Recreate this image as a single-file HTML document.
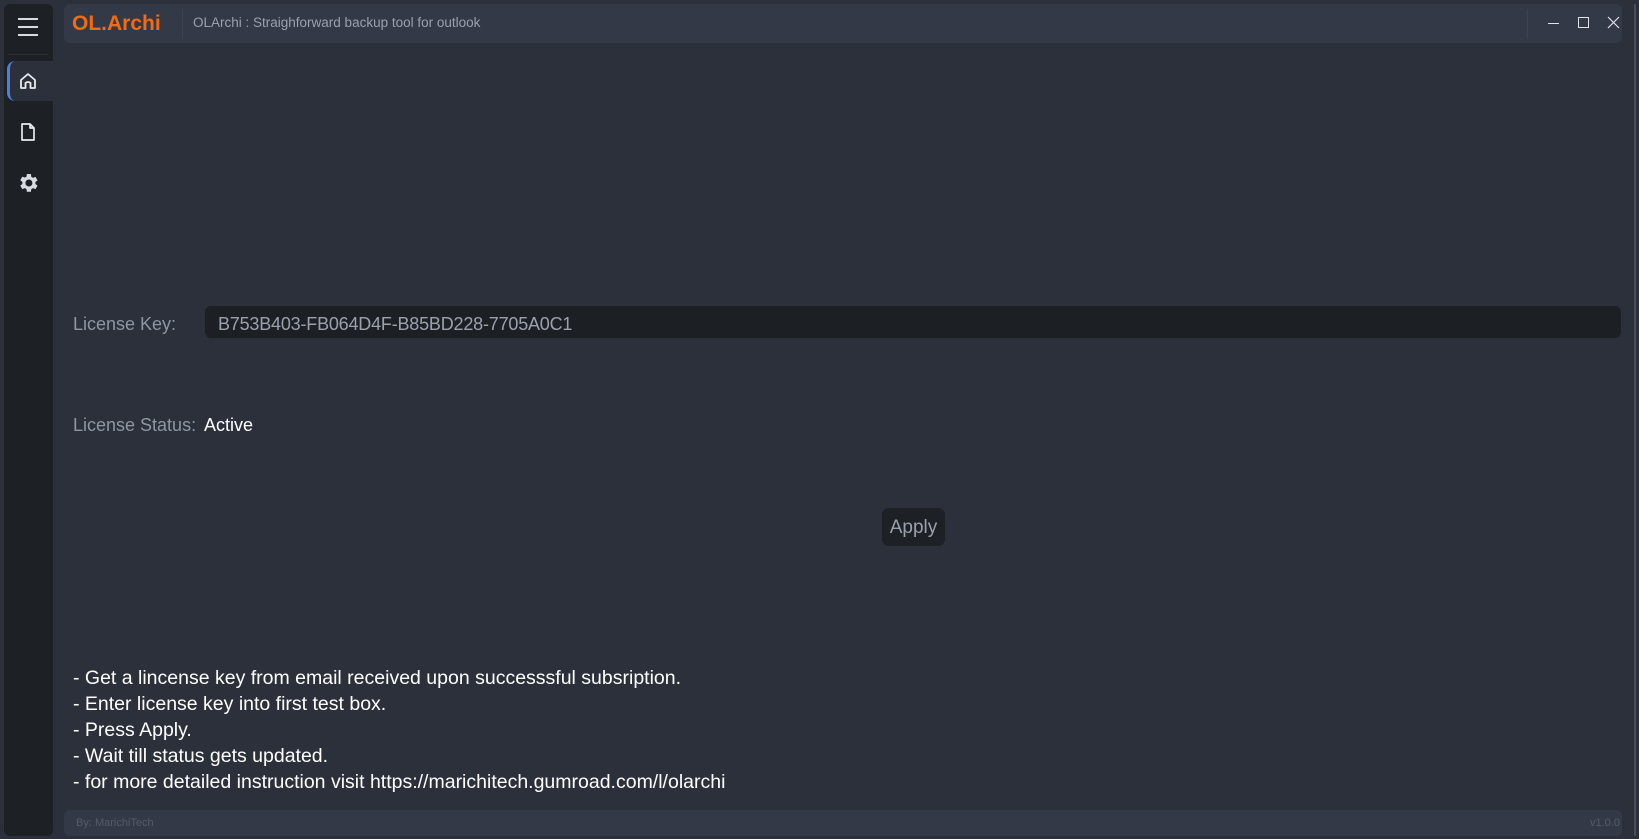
<!DOCTYPE html>
<html><head><meta charset="utf-8"><style>
*{margin:0;padding:0;box-sizing:border-box}
body{width:1639px;height:839px;background:#2b303a;font-family:"Liberation Sans",sans-serif;position:relative;overflow:hidden;color:#fff}
.abs{position:absolute}
#side{left:4px;top:4px;width:49px;height:832px;background:#1d2025;border-radius:6px}
#sel{left:7px;top:61px;width:46px;height:40px;background:#2b303a;border-left:3px solid #4d7fd6;border-radius:8px 0 0 8px}
#title{left:64px;top:4px;width:1558px;height:39px;background:#333946;border-radius:6px}
#foot{left:64px;top:810px;width:1558px;height:26px;background:#333946;border-radius:6px}
.lbl{color:#8f96a3;font-size:18px}
.line{color:#fff;font-size:19.5px;left:73px}
</style></head><body>
<div id="side" class="abs"></div>
<div class="abs" style="left:18px;top:18px;width:20px;height:2px;background:#d8dbe0;box-shadow:0 8px 0 #d8dbe0,0 16px 0 #d8dbe0"></div>
<div class="abs" style="left:8px;top:54px;width:40px;height:1px;background:#2b2f36"></div>
<div id="sel" class="abs"></div>
<svg class="abs" style="left:18px;top:71px" width="20" height="20" viewBox="0 0 20 20" fill="none" stroke="#e8eaee" stroke-width="1.8" stroke-linejoin="round"><path d="M3 9 L10 3 L17 9 V17 H12.5 V12 Q10 10 7.5 12 V17 H3 Z"/></svg>
<svg class="abs" style="left:19px;top:122px" width="18" height="20" viewBox="0 0 18 20" fill="none" stroke="#e8eaee" stroke-width="1.7" stroke-linejoin="round"><path d="M3 2 H11 L15 6 V18 H3 Z M11 2 V6 H15"/></svg>
<svg class="abs" style="left:16px;top:171px" width="24" height="24" viewBox="0 0 24 24"><path fill="#d8dbe2" d="M19.4 13a7.5 7.5 0 000-2l2.1-1.6-2-3.5-2.5 1a7.6 7.6 0 00-1.7-1L14.9 3h-4l-.4 2.6a7.6 7.6 0 00-1.7 1l-2.5-1-2 3.5L6.4 11a7.5 7.5 0 000 2l-2.1 1.6 2 3.5 2.5-1a7.6 7.6 0 001.7 1l.4 2.6h4l.4-2.6a7.6 7.6 0 001.7-1l2.5 1 2-3.5zM12.9 15.5a3.5 3.5 0 110-7 3.5 3.5 0 010 7z"/></svg>
<div id="title" class="abs"></div>
<div class="abs" style="left:72px;top:12px;color:#f26b12;font-weight:bold;font-size:21px">OL.Archi</div>
<div class="abs" style="left:182px;top:9px;width:1px;height:30px;background:#3d4450"></div>
<div class="abs" style="left:193px;top:15px;color:#9aa1ad;font-size:13.5px">OLArchi : Straighforward backup tool for outlook</div>
<div class="abs" style="left:1527px;top:9px;width:1px;height:30px;background:#3d4450"></div>
<div class="abs" style="left:1548px;top:23px;width:11px;height:1px;background:#e0e2e6"></div>
<div class="abs" style="left:1578px;top:17px;width:11px;height:11px;border:1px solid #e0e2e6"></div>
<svg class="abs" style="left:1607px;top:16px" width="13" height="13"><path d="M1 1L12 12M12 1L1 12" stroke="#e0e2e6" stroke-width="1.2"/></svg>
<div class="abs" style="left:1634px;top:4px;width:2px;height:832px;background:#4a505a;border-radius:2px"></div>
<div class="abs lbl" style="left:73px;top:314px">License Key:</div>
<div class="abs" style="left:205px;top:306px;width:1416px;height:32px;background:#1c1f24;border-radius:6px"></div>
<div class="abs" style="left:218px;top:314px;color:#9aa1ad;font-size:18px;letter-spacing:-0.2px">B753B403-FB064D4F-B85BD228-7705A0C1</div>
<div class="abs lbl" style="left:73px;top:415px">License Status:</div>
<div class="abs" style="left:204px;top:415px;font-size:18px">Active</div>
<div class="abs" style="left:882px;top:508px;width:63px;height:38px;background:#1d2025;border-radius:7px;color:#9aa1ad;font-size:19px;text-align:center;line-height:40px">Apply</div>
<div class="abs line" style="top:667px">- Get a lincense key from email received upon successsful subsription.</div>
<div class="abs line" style="top:693px">- Enter license key into first test box.</div>
<div class="abs line" style="top:719px">- Press Apply.</div>
<div class="abs line" style="top:745px">- Wait till status gets updated.</div>
<div class="abs line" style="top:771px">- for more detailed instruction visit https://marichitech.gumroad.com/l/olarchi</div>
<div id="foot" class="abs"></div>
<div class="abs" style="left:76px;top:817px;color:#555c68;font-size:11px">By: MarichiTech</div>
<div class="abs" style="left:1590px;top:817px;color:#555c68;font-size:11px">v1.0.0</div>
</body></html>
